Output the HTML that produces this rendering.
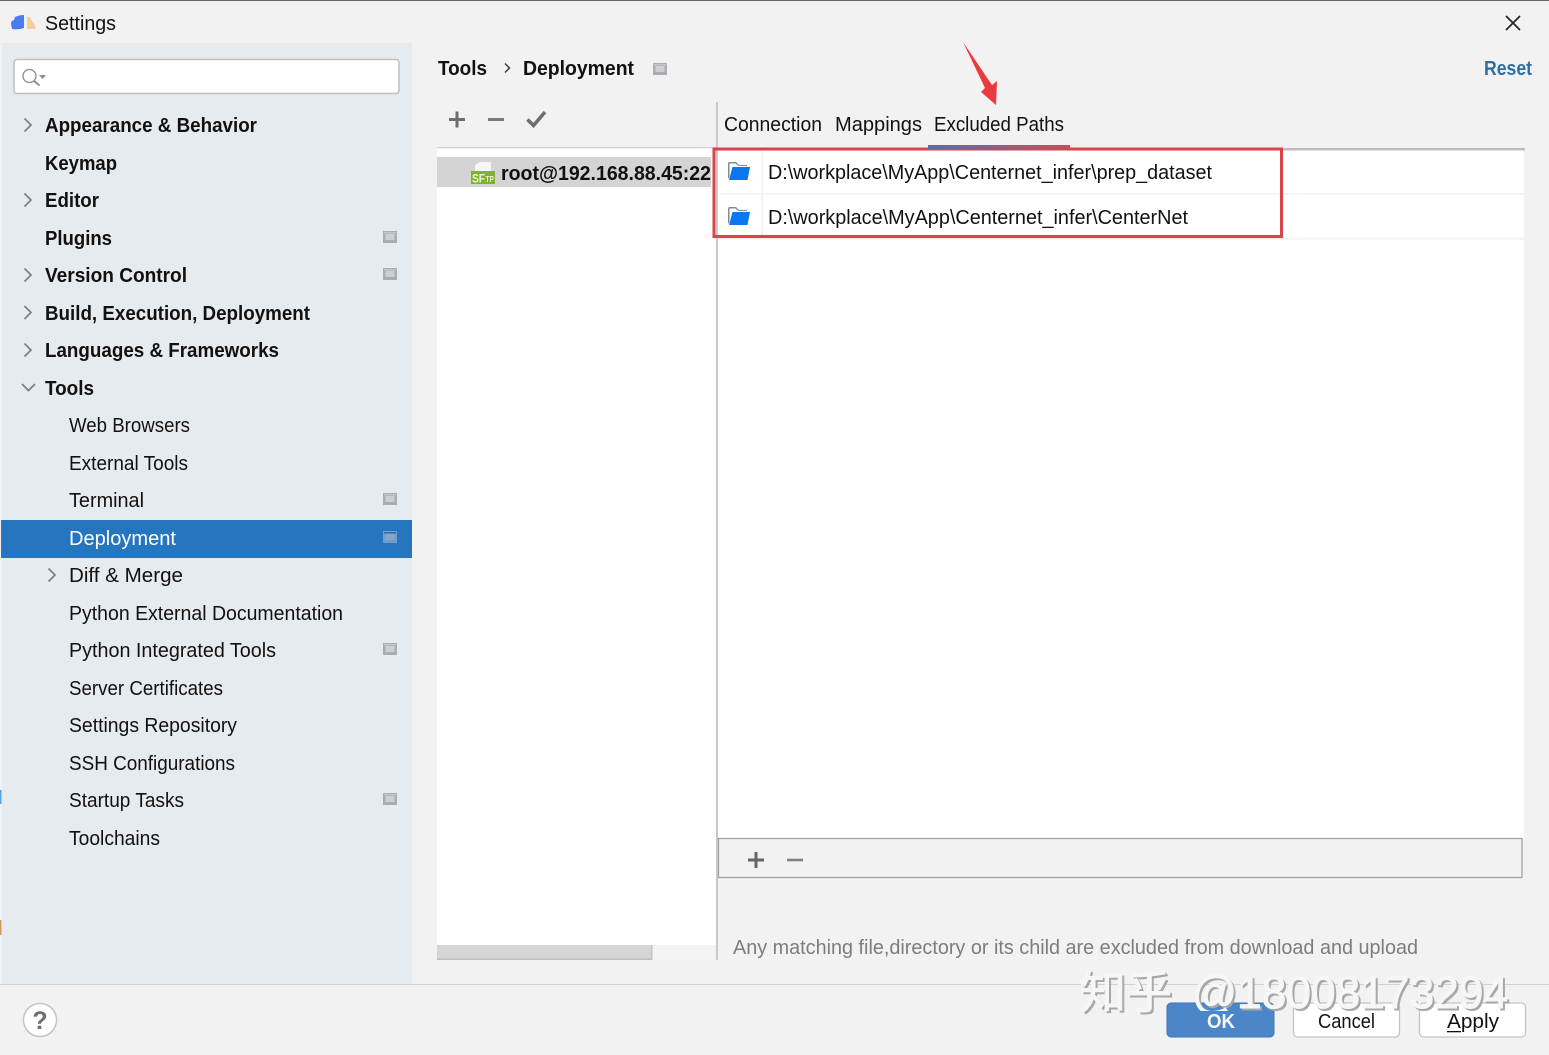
<!DOCTYPE html>
<html><head><meta charset="utf-8"><title>Settings</title>
<style>
html,body{margin:0;padding:0;background:#f2f2f2;width:1549px;height:1055px;overflow:hidden}
svg{display:block}
text{font-family:"Liberation Sans","Noto Sans CJK SC",sans-serif;font-size:20px;fill:#111}
.b{font-weight:bold;font-size:20px}
.wm{font-size:45px;stroke-width:1}
</style></head><body>
<svg width="1549" height="1055" viewBox="0 0 1549 1055" xmlns="http://www.w3.org/2000/svg">
<defs>
<g id="pg"><rect x="0" y="0" width="14" height="12" fill="#a9adb2"/><rect x="2.500" y="3" width="9" height="6" fill="#ccd0d4"/><rect x="1" y="1" width="12" height="1.500" fill="#c3c6ca"/></g>
<g id="fd"><path d="M0 3 Q0 1 2 1 L8 1 L11 4 L19 4 L19 5 L10.500 5 L7.500 2.500 L2 2.500 Q1.500 2.500 1.500 3.500 L1.500 16 L0 18 Z" fill="#858b93"/><path d="M4.500 6 L22 6 L19.500 19 L1 19 Z" fill="#0a78f0"/></g>
<path id="cr" d="M0 0 L6.500 6.500 L0 13" fill="none" stroke="#7c7f83" stroke-width="1.700"/>
<linearGradient id="tabu" x1="0" x2="1" y1="0" y2="0"><stop offset="0" stop-color="#5a6fa6"/><stop offset="1" stop-color="#c4505c"/></linearGradient>
</defs>

<rect width="1549" height="1055" fill="#f2f2f2"/>
<rect width="1549" height="1" fill="#666"/>

<!-- Title bar -->
<path d="M11 24 Q11 20.500 14 20 L15 17 Q19 15 24 15 L24 28 Q18 30 12 29 Z" fill="#4a7cf0"/>
<path d="M27 17 L30 17 L32 21 L36 27 L35 29 L27 29 Z" fill="#f5cf9c"/>
<text x="45" y="30" textLength="71" lengthAdjust="spacingAndGlyphs">Settings</text>
<path d="M1506 16 L1520 30 M1520 16 L1506 30" stroke="#222" stroke-width="1.700"/>

<!-- Sidebar -->
<rect x="2" y="43" width="410" height="941" fill="#e6ebf0"/>
<rect x="0" y="790" width="1.500" height="14" fill="#5aa0d8"/>
<rect x="0" y="920" width="1.500" height="15" fill="#d09a5c"/>
<rect x="14" y="59.500" width="385" height="34" rx="3" fill="#fff" stroke="#bdbfc2" stroke-width="1.500"/>
<circle cx="29.500" cy="76" r="6.500" fill="none" stroke="#8a8c90" stroke-width="1.300"/>
<path d="M34 81 L39.500 85.500" stroke="#8a8c90" stroke-width="1.800"/>
<path d="M39 75 L46 75 L42.500 79 Z" fill="#8a8c90"/>

<rect x="1" y="520" width="411" height="38" fill="#2675bf"/>

<use href="#cr" x="24.500" y="118.500"/>
<use href="#cr" x="24.500" y="193.500"/>
<use href="#cr" x="24.500" y="268.500"/>
<use href="#cr" x="24.500" y="306"/>
<use href="#cr" x="24.500" y="343.500"/>
<path d="M22 384 L28.500 390.500 L35 384" fill="none" stroke="#7c7f83" stroke-width="1.700"/>
<use href="#cr" x="48.500" y="568.500"/>

<g class="b">
<text class="b" x="45" y="132" textLength="212" lengthAdjust="spacingAndGlyphs">Appearance &amp; Behavior</text>
<text class="b" x="45" y="170" textLength="72" lengthAdjust="spacingAndGlyphs">Keymap</text>
<text class="b" x="45" y="207" textLength="54" lengthAdjust="spacingAndGlyphs">Editor</text>
<text class="b" x="45" y="245" textLength="67" lengthAdjust="spacingAndGlyphs">Plugins</text>
<text class="b" x="45" y="282" textLength="142" lengthAdjust="spacingAndGlyphs">Version Control</text>
<text class="b" x="45" y="320" textLength="265" lengthAdjust="spacingAndGlyphs">Build, Execution, Deployment</text>
<text class="b" x="45" y="357" textLength="234" lengthAdjust="spacingAndGlyphs">Languages &amp; Frameworks</text>
<text class="b" x="45" y="395" textLength="49" lengthAdjust="spacingAndGlyphs">Tools</text>
</g>
<text x="69" y="432" textLength="121" lengthAdjust="spacingAndGlyphs">Web Browsers</text>
<text x="69" y="470" textLength="119" lengthAdjust="spacingAndGlyphs">External Tools</text>
<text x="69" y="507" textLength="75" lengthAdjust="spacingAndGlyphs">Terminal</text>
<text x="69" y="545" textLength="107" lengthAdjust="spacingAndGlyphs" style="fill:#fff">Deployment</text>
<text x="69" y="582" textLength="114" lengthAdjust="spacingAndGlyphs">Diff &amp; Merge</text>
<text x="69" y="620" textLength="274" lengthAdjust="spacingAndGlyphs">Python External Documentation</text>
<text x="69" y="657" textLength="207" lengthAdjust="spacingAndGlyphs">Python Integrated Tools</text>
<text x="69" y="695" textLength="154" lengthAdjust="spacingAndGlyphs">Server Certificates</text>
<text x="69" y="732" textLength="168" lengthAdjust="spacingAndGlyphs">Settings Repository</text>
<text x="69" y="770" textLength="166" lengthAdjust="spacingAndGlyphs">SSH Configurations</text>
<text x="69" y="807" textLength="115" lengthAdjust="spacingAndGlyphs">Startup Tasks</text>
<text x="69" y="845" textLength="91" lengthAdjust="spacingAndGlyphs">Toolchains</text>

<use href="#pg" x="383" y="231"/>
<use href="#pg" x="383" y="268"/>
<use href="#pg" x="383" y="493"/>
<g transform="translate(383,531)"><rect width="14" height="12" fill="#6d9fd0"/><rect x="2.500" y="3" width="9" height="6" fill="#8aa5c4"/><rect x="1" y="1" width="12" height="1.500" fill="#2f6fb0"/></g>
<use href="#pg" x="383" y="643"/>
<use href="#pg" x="383" y="793"/>

<!-- Breadcrumb -->
<text class="b" x="438" y="75" textLength="49" lengthAdjust="spacingAndGlyphs">Tools</text>
<path d="M505 63.500 L509.500 68 L505 72.500" fill="none" stroke="#333" stroke-width="1.400"/>
<text class="b" x="523" y="75" textLength="111" lengthAdjust="spacingAndGlyphs">Deployment</text>
<use href="#pg" x="653" y="63"/>
<text class="b" x="1484" y="75" textLength="48" lengthAdjust="spacingAndGlyphs" style="fill:#2f6ea5">Reset</text>

<!-- Left toolbar -->
<path d="M457 111.500 V127.500 M449 119.500 H465" stroke="#6e6e6e" stroke-width="3"/>
<path d="M488 119.500 H504" stroke="#7a7a7a" stroke-width="3"/>
<path d="M527.500 119.500 L533.500 125.500 L545 112" fill="none" stroke="#6e6e6e" stroke-width="3.600"/>
<rect x="437" y="147" width="279" height="1" fill="#cfcfcf"/>

<!-- Server list -->
<rect x="437" y="149" width="279" height="811" fill="#fff"/>
<rect x="437" y="157" width="274" height="30" fill="#d4d4d4"/>
<path d="M475 171 V165 L480 162 H491 V171 Z" fill="#f6f6f6"/>
<rect x="471" y="171" width="24" height="13" fill="#7fb32e"/>
<text x="472" y="182.500" style="font-size:11.500px;font-weight:bold;fill:#eef6dc" textLength="13" lengthAdjust="spacingAndGlyphs">SF</text>
<text x="485.500" y="182" style="font-size:8px;font-weight:bold;fill:#eef6dc" textLength="8.500" lengthAdjust="spacingAndGlyphs">TP</text>
<text class="b" x="501" y="180" textLength="210" lengthAdjust="spacingAndGlyphs">root@192.168.88.45:22</text>

<rect x="437" y="945" width="279" height="15" fill="#f4f4f4"/>
<rect x="437" y="945" width="215" height="15" fill="#d6d6d6"/>
<rect x="437" y="958.500" width="215" height="1.500" fill="#bdbdbd"/>
<rect x="651" y="945" width="1.500" height="15" fill="#c4c4c4"/>

<!-- Divider -->
<rect x="716" y="102" width="2" height="858" fill="#c9c9c9"/>

<!-- Tabs -->
<text x="724" y="131" textLength="98" lengthAdjust="spacingAndGlyphs">Connection</text>
<text x="835" y="131" textLength="87" lengthAdjust="spacingAndGlyphs">Mappings</text>
<text x="934" y="131" textLength="130" lengthAdjust="spacingAndGlyphs">Excluded Paths</text>

<!-- Table -->
<rect x="718" y="150" width="806" height="688" fill="#fff"/>
<rect x="718" y="148" width="807" height="2.500" fill="#bdbdbd"/>
<rect x="718" y="193" width="806" height="1.500" fill="#f2f2f2"/>
<rect x="718" y="238" width="806" height="1.500" fill="#f2f2f2"/>
<rect x="761.500" y="150" width="1.500" height="88" fill="#f2f2f2"/>
<use href="#fd" x="728" y="161"/>
<use href="#fd" x="728" y="206"/>
<text x="768" y="179" textLength="444" lengthAdjust="spacingAndGlyphs">D:\workplace\MyApp\Centernet_infer\prep_dataset</text>
<text x="768" y="224" textLength="420" lengthAdjust="spacingAndGlyphs">D:\workplace\MyApp\Centernet_infer\CenterNet</text>

<!-- Table toolbar -->
<rect x="718.500" y="838.500" width="803.500" height="39" fill="#f2f2f2" stroke="#a3a3a3" stroke-width="1.300"/>
<path d="M756 852 V868 M748 860 H764" stroke="#666" stroke-width="3"/>
<path d="M787 860 H803" stroke="#808080" stroke-width="2.600"/>

<text x="733" y="954" textLength="685" lengthAdjust="spacingAndGlyphs" style="fill:#7d7d7d">Any matching file,directory or its child are excluded from download and upload</text>

<!-- Red annotation -->
<rect x="714" y="149" width="567.500" height="87.500" fill="none" stroke="#d9434a" stroke-width="3"/>
<rect x="928" y="145" width="142" height="4.500" fill="url(#tabu)"/>
<path d="M963 42 L985 88 L981 92 L996 105 L997 81 L992 85 Z" fill="#ea3a3f"/>

<!-- Footer -->
<rect x="0" y="984" width="1549" height="1" fill="#d0d0d0"/>
<circle cx="40" cy="1020" r="16.500" fill="#fff" stroke="#c4c4c4" stroke-width="1.500"/>
<text x="40" y="1029" text-anchor="middle" style="font-size:25px;font-weight:bold;fill:#6e6e6e">?</text>

<rect x="1167" y="1003" width="107" height="34" rx="4" fill="#4a86c8" stroke="#3f77b4"/>
<rect x="1293.500" y="1003" width="106" height="34" rx="4" fill="#fff" stroke="#c4c4c4" stroke-width="1.300"/>
<rect x="1419.500" y="1003" width="106" height="34" rx="4" fill="#fff" stroke="#c4c4c4" stroke-width="1.300"/>
<text x="1318" y="1028" textLength="57" lengthAdjust="spacingAndGlyphs">Cancel</text>
<text x="1447" y="1028" textLength="52" lengthAdjust="spacingAndGlyphs">Apply</text>
<rect x="1447" y="1031" width="14" height="1.300" fill="#111"/>

<!-- Watermark -->
<g style="fill:#a8a8a8;stroke:#a8a8a8">
<text class="wm" x="1082" y="1010" textLength="92" lengthAdjust="spacingAndGlyphs" style="fill:#a8a8a8">知乎</text>
<text class="wm" x="1194" y="1010" textLength="316" lengthAdjust="spacingAndGlyphs" style="fill:#a8a8a8">@18008173294</text>
</g>
<g style="stroke:#f6f6f6">
<text class="wm" x="1080" y="1008" textLength="92" lengthAdjust="spacingAndGlyphs" style="fill:#f6f6f6">知乎</text>
<text class="wm" x="1192" y="1008" textLength="316" lengthAdjust="spacingAndGlyphs" style="fill:#f6f6f6">@18008173294</text>
</g>
<rect x="1200" y="1011" width="42" height="21" fill="#4a86c8"/>
<text class="b" x="1207" y="1028" textLength="28" lengthAdjust="spacingAndGlyphs" style="fill:#f2f7fc">OK</text>
</svg>
</body></html>
